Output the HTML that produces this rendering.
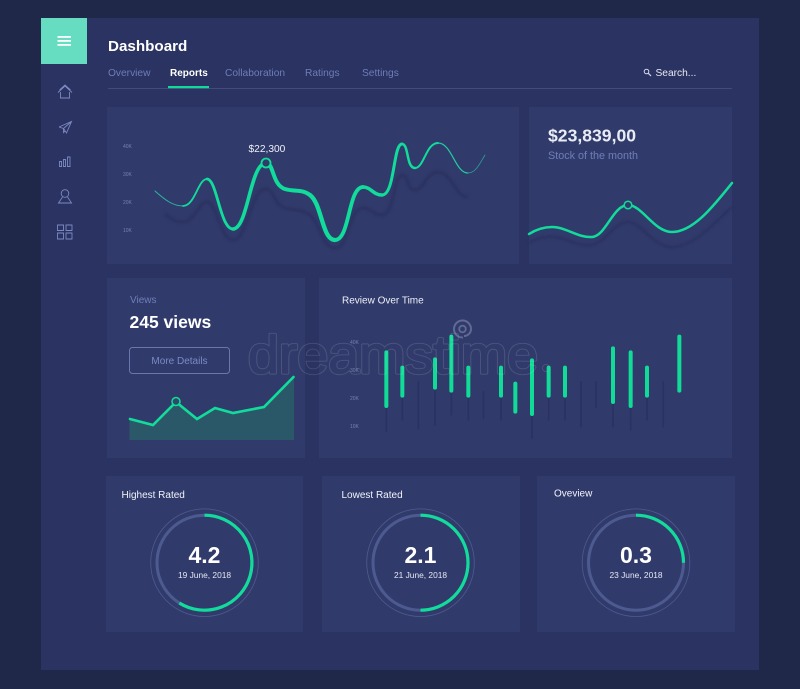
<!DOCTYPE html>
<html><head><meta charset="utf-8"><title>Dashboard</title>
<style>
html,body{margin:0;padding:0;background:#20284a;width:800px;height:689px;overflow:hidden}
svg{display:block;filter:blur(.3px)}
text{font-family:"Liberation Sans",sans-serif}
</style></head><body>
<svg width="800" height="689" viewBox="0 0 800 689" xmlns="http://www.w3.org/2000/svg">
<defs>
<filter id="b" x="-10%" y="-30%" width="120%" height="160%"><feGaussianBlur stdDeviation="1.2"/></filter>
<mask id="wm" maskUnits="userSpaceOnUse" x="240" y="320" width="320" height="70">
<text x="248" y="373" font-size="53" textLength="290" lengthAdjust="spacingAndGlyphs" fill="#fff" stroke="#fff" stroke-width="3.200" stroke-linejoin="round">dreamstime</text>
<text x="248" y="373" font-size="53" textLength="290" lengthAdjust="spacingAndGlyphs" fill="#000" stroke="#000" stroke-width="1.400" stroke-linejoin="round">dreamstime</text>
</mask>
</defs>
<rect width="800" height="689" fill="#20284a"/>
<rect x="41" y="18" width="718" height="652" fill="#2a3361"/>
<rect x="41" y="18" width="46" height="46" fill="#66dcc0"/>
<g fill="#fff"><rect x="57.500" y="36" width="13.500" height="1.800"/><rect x="57.500" y="40" width="13.500" height="1.800"/><rect x="57.500" y="44" width="13.500" height="1.800"/></g>

<g fill="none" stroke="#7c89c2" stroke-width=".9">
<path d="M58 92.500 65 86 72 92.500M59.500 90 65 85 70.500 90M60.500 92V98H69.500V92"/>
<path d="M59 127 71.500 121.500 66.500 133 63.500 128.500 59 127M63.500 128.500 71.500 121.500M63.500 128.500V132.500L65 131"/>
<path d="M59.500 161.500h2v5h-2zM63.500 159.500h2v7h-2zM67.500 157h2.500v9.500h-2.500z"/>
<circle cx="65" cy="193.500" r="3.800"/><path d="M62.500 197 58.500 203H71.500L67.500 197"/>
<path d="M57.500 225h6v5.500h-6zM66 225h6v5.500h-6zM57.500 233h6v6h-6zM66 233h6v6h-6z"/>
</g>

<text x="108" y="51" font-size="15.200" font-weight="700" fill="#fff">Dashboard</text>
<g font-size="10.200" fill="#6f7db8">
<text x="108" y="76">Overview</text>
<text x="170" y="76" font-weight="700" fill="#fff" font-size="10">Reports</text>
<text x="225" y="76">Collaboration</text>
<text x="305" y="76">Ratings</text>
<text x="362" y="76">Settings</text>
</g>
<rect x="108" y="88" width="624" height="1" fill="#414b7c"/>
<rect x="168" y="86" width="41" height="2.200" fill="#12d89b"/>
<circle cx="646.500" cy="71.500" r="2.300" fill="none" stroke="#d5d9ea" stroke-width="1"/><path d="M648.300 73.300 651 76" stroke="#d5d9ea" stroke-width="1.200"/>
<text x="655.500" y="76" font-size="10.200" fill="#e8eaf4">Search...</text>

<g fill="#313b6b">
<rect x="107" y="107" width="412" height="157"/>
<rect x="529" y="107" width="203" height="157"/>
<rect x="107" y="278" width="198" height="180"/>
<rect x="319" y="278" width="413" height="180"/>
<rect x="106" y="476" width="197" height="156"/>
<rect x="322" y="476" width="198" height="156"/>
<rect x="537" y="476" width="198" height="156"/>
</g>

<!-- main chart -->
<g font-size="5" fill="#7581ad"><text x="123" y="148">40K</text><text x="123" y="176">30K</text><text x="123" y="204">20K</text><text x="123" y="232">10K</text></g>
<path d="M165 214C172 220 176 222 183 222C195 222 198 202 207 202C217 202 220 240 233 240C248 240 250 189 266 189C274 189 274 205 285 208C295 211 302 209 310 215C321 224 322 248 335 248C350 248 348 208 363 208C371 208 373 215 382 215C395 215 393 175 402 175C409 175 406 190 415 190C424 190 426 172 438 172C452 172 455 197 468 197" fill="none" stroke="#2a3262" stroke-width="3.500" filter="url(#b)"/>
<g fill="none" stroke="#12dc9b" stroke-linecap="round">
<path d="M155 191C165 200 173 206 183 206" stroke-width="1" stroke="#27b9a0"/>
<path d="M183 206C195 206 198 179 207 179" stroke-width="1.800"/>
<path d="M207 179C217 179 220 229 233 229" stroke-width="2.800"/>
<path d="M233 229C248 229 250 163 266 163" stroke-width="3.600"/>
<path d="M266 163C274 163 272 185 285 189C295 192 302 189 310 195" stroke-width="4"/>
<path d="M310 195C322 204 322 240 335 240" stroke-width="4.300"/>
<path d="M335 240C350 240 348 187 363 187" stroke-width="3.800"/>
<path d="M363 187C371 187 373 195 382 195" stroke-width="3.500"/>
<path d="M382 195C395 195 393 144 402 144" stroke-width="3"/>
<path d="M402 144C409 144 406 168 415 168" stroke-width="2.500"/>
<path d="M415 168C424 168 426 143 438 143" stroke-width="2"/>
<path d="M438 143C452 143 455 173 468 173" stroke-width="1.200" stroke="#1fcf9e"/>
<path d="M468 173C476 173 480 163 485 155" stroke-width=".8" stroke="#2a9e9a"/>
</g>
<circle cx="266" cy="163" r="4.500" fill="#313b6b" stroke="#12dc9b" stroke-width="1.800"/>
<text x="248.500" y="152" font-size="10.200" fill="#eef0f8">$22,300</text>

<!-- stock -->
<text x="548" y="141.500" font-size="17.600" font-weight="700" fill="#e9ebf5">$23,839,00</text>
<text x="548" y="159" font-size="10.800" fill="#6f7db8">Stock of the month</text>
<path d="M529 243C537 238 544 237 552 237C566 237 575 246 590 245C606 244 613 222 628 222C642 222 652 247 672 247C694 247 715 222 732 207" fill="none" stroke="#2a3262" stroke-width="3" filter="url(#b)"/>
<path d="M529 234C537 229 544 227 552 227C566 227 578 238 592 237C606 236 613 205 628 205C642 205 654 232 672 232C694 232 715 204 732 183" fill="none" stroke="#12dc9b" stroke-width="2.500" stroke-linecap="round"/>
<circle cx="628" cy="205" r="3.800" fill="#313b6b" stroke="#12dc9b" stroke-width="1.500"/>

<!-- views -->
<text x="130" y="303" font-size="10" fill="#6f7db8">Views</text>
<text x="129.500" y="328" font-size="17.500" font-weight="700" fill="#fff">245 views</text>
<rect x="129.500" y="347.500" width="100" height="26" rx="3" fill="none" stroke="#6a77aa" stroke-width="1"/>
<text x="179.500" y="364" font-size="10" fill="#7a88c4" text-anchor="middle">More Details</text>
<path d="M129.500 419 153 425 176 402 197 419 215 408 233 413 264 407 294 377V440H129.500Z" fill="#2b5869"/>
<path d="M130 419 153 425 176 402 197 419 215 408 233 413 264 407 293.500 377" fill="none" stroke="#12dc9b" stroke-width="2.600" stroke-linecap="round"/>
<circle cx="176" cy="401.500" r="4" fill="#2e4a6a" stroke="#12dc9b" stroke-width="1.500"/>

<!-- review -->
<text x="342" y="303.500" font-size="10" fill="#eef0f8">Review Over Time</text>
<g font-size="5" fill="#7581ad"><text x="350" y="344">40K</text><text x="350" y="372">30K</text><text x="350" y="400">20K</text><text x="350" y="428">10K</text></g>
<g transform="translate(320 280) scale(.33333)" stroke-linecap="round">
<g stroke="#2a3262" stroke-width="5">
<path d="M199 383V455M247 352V420M295 305V445M345 328V435M394 337V405M445 352V420M490 335V415M543 352V420M636 407V475M686 352V420M735 352V420M783 305V440M828 305V382M879 371V440M932 383V450M981 352V420M1030 305V440"/>
</g>
<g stroke="#10dc98" stroke-width="12">
<path d="M199 217V378M247 263V347M345 238V323M394 170V332M445 263V347M543 263V347M586 311V395M636 241V402M686 263V347M735 263V347M879 205V366M932 217V378M981 263V347M1078 170V332"/>
</g>
</g>

<!-- watermark -->
<rect x="240" y="320" width="320" height="70" fill="#fff" fill-opacity=".13" mask="url(#wm)"/>
<g fill="none" stroke="#aab1d2" stroke-opacity=".4">
<path d="M463 337.500A8.500 8.500 0 1 1 471 329A7 7 0 0 1 464 336" stroke-width="2"/>
<circle cx="462.500" cy="329" r="3.300" stroke-width="1.800"/>
<circle cx="546" cy="368" r="3.500" stroke-width=".8" stroke-opacity=".25"/>
</g>

<!-- gauges -->
<g fill="none">
<g stroke="#4f5b90" stroke-width=".8">
<circle cx="204.500" cy="562.700" r="53.800"/><circle cx="420.500" cy="562.700" r="53.800"/><circle cx="636" cy="562.700" r="53.800"/>
</g>
<g stroke="#4d5a90" stroke-width="3">
<circle cx="204.500" cy="562.700" r="47.500"/><circle cx="420.500" cy="562.700" r="47.500"/><circle cx="636" cy="562.700" r="47.500"/>
</g>
<g stroke="#12dc9b" stroke-width="3.200">
<path d="M204.500 515.200A47.500 47.500 0 1 1 179.300 603"/>
<path d="M420.500 515.200A47.500 47.500 0 0 1 420.500 610.200"/>
<path d="M636 515.200A47.500 47.500 0 0 1 683.500 562.700"/>
</g>
</g>
<g fill="#f2f3fa" font-size="10">
<text x="121.500" y="498">Highest Rated</text>
<text x="341.500" y="498">Lowest Rated</text>
<text x="554" y="496.500">Oveview</text>
</g>
<g fill="#fff" font-size="23" font-weight="700" text-anchor="middle">
<text x="204.500" y="563">4.2</text><text x="420.500" y="563">2.1</text><text x="636" y="563">0.3</text>
</g>
<g fill="#e4e7f3" font-size="8.400" text-anchor="middle">
<text x="204.500" y="578">19 June, 2018</text><text x="420.500" y="578">21 June, 2018</text><text x="636" y="578">23 June, 2018</text>
</g>
</svg>
</body></html>
